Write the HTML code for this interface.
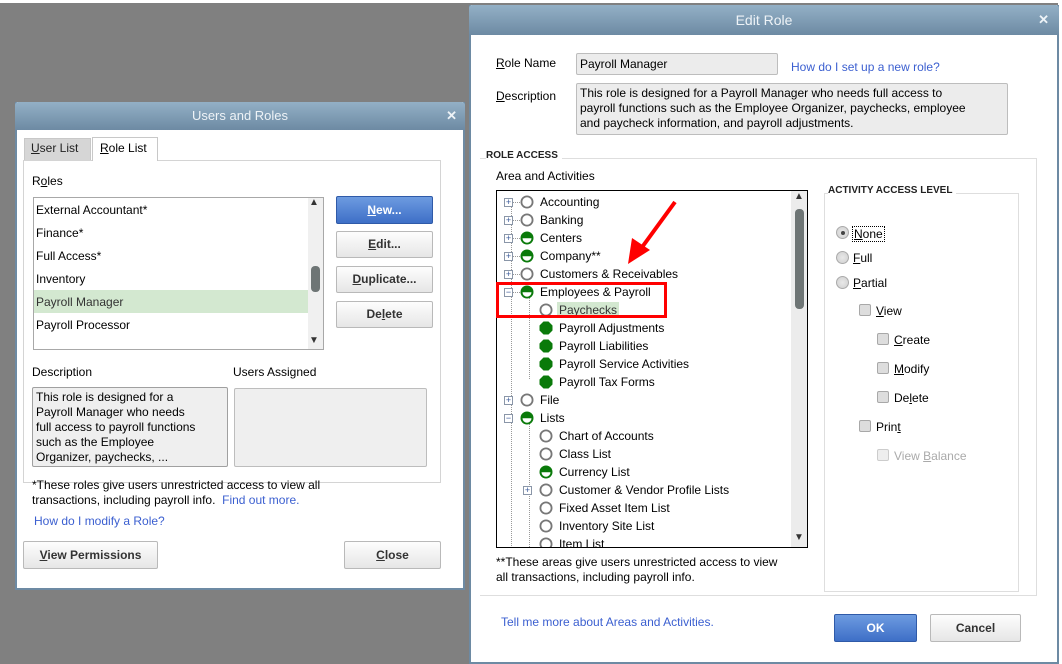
<!DOCTYPE html>
<html><head><meta charset="utf-8"><style>
*{margin:0;padding:0;box-sizing:border-box}
body{width:1062px;height:664px;overflow:hidden;background:#808080;font-family:"Liberation Sans",sans-serif;font-size:12px;color:#000;position:relative}
.a{position:absolute}
.title{background:linear-gradient(#93b0c6,#6d8aa3);color:#eef3f7;text-align:center;font-size:13px}
.btn{position:absolute;border:1px solid #b9b9b9;border-radius:2px;background:linear-gradient(#fdfdfd,#e6e6e6);text-align:center;font-weight:bold;color:#333;font-size:12px}
.blue{background:linear-gradient(#6d9be0,#3e6fc7);border-color:#2f5aa8;color:#fff}
.link{color:#3b5fd0}
.tx{position:absolute;white-space:nowrap}
.box{position:absolute;background:#efefef;border:1px solid #bdbdbd;border-radius:2px}
.ti{position:absolute;white-space:nowrap;height:18px;line-height:18px}
.ti svg{position:absolute;left:0;top:2px}
.ti span{position:absolute;left:20px}
.pl{position:absolute;width:9px;height:9px;border:1px solid #8a96a8;background:#fff;font-size:9px;line-height:7px;text-align:center;color:#3a5a9a}
.cb{position:absolute;width:12px;height:12px;border:1px solid #a8a8a8;background:#ddd;border-radius:2px}
.rb{position:absolute;width:13px;height:13px;border:1px solid #aaa;border-radius:50%;background:radial-gradient(#e8e8e8,#cfcfcf)}
u{text-decoration:underline}
</style></head><body>
<div class="a" style="left:0;top:0;width:1062px;height:3px;background:#fff"></div>
<div class="a" style="left:1058px;top:0;width:4px;height:664px;background:#fff"></div>

<!-- Users and Roles -->
<div class="a" style="left:15px;top:102px;width:450px;height:488px;background:#fff;border:2px solid #6d8aa3;border-top:none">
 <div class="title a" style="left:-2px;top:0;width:450px;height:28px;line-height:28px;border-radius:3px 3px 0 0">Users and Roles<span class="a" style="right:8px;top:0;font-weight:bold">✕</span></div>
</div>
<div class="a" style="left:24px;top:138px;width:67px;height:23px;background:#d6d6d6;border:1px solid #c8c8c8;border-bottom:none"></div>
<div class="tx" style="left:31px;top:141px;color:#222"><u>U</u>ser List</div>
<div class="a" style="left:92px;top:137px;width:66px;height:24px;background:#fff;border:1px solid #c8c8c8;border-bottom:none;z-index:2"></div>
<div class="tx" style="left:100px;top:141px;z-index:3"><u>R</u>ole List</div>
<div class="a" style="left:23px;top:160px;width:418px;height:323px;border:1px solid #d4d4d4"></div>
<div class="tx" style="left:32px;top:174px">R<u>o</u>les</div>
<div class="a" style="left:33px;top:197px;width:291px;height:153px;border:1px solid #a8a8a8;background:#fff"></div>
<div class="a" style="left:34px;top:290px;width:274px;height:23px;background:#d3e8d0"></div>
<div class="tx" style="left:36px;top:203px">External Accountant*</div>
<div class="tx" style="left:36px;top:226px">Finance*</div>
<div class="tx" style="left:36px;top:249px">Full Access*</div>
<div class="tx" style="left:36px;top:272px">Inventory</div>
<div class="tx" style="left:36px;top:295px;color:#333">Payroll Manager</div>
<div class="tx" style="left:36px;top:318px">Payroll Processor</div>
<div class="a" style="left:308px;top:198px;width:15px;height:151px;background:#f0f0f0"></div>
<div class="tx" style="left:309px;top:197px;font-size:10px;color:#333">▲</div>
<div class="tx" style="left:309px;top:335px;font-size:10px;color:#333">▼</div>
<div class="a" style="left:311px;top:266px;width:9px;height:26px;background:#6e7575;border-radius:4px"></div>
<div class="btn blue" style="left:336px;top:196px;width:97px;height:28px;line-height:26px"><u>N</u>ew...</div>
<div class="btn" style="left:336px;top:231px;width:97px;height:27px;line-height:25px"><u>E</u>dit...</div>
<div class="btn" style="left:336px;top:266px;width:97px;height:27px;line-height:25px"><u>D</u>uplicate...</div>
<div class="btn" style="left:336px;top:301px;width:97px;height:27px;line-height:25px">De<u>l</u>ete</div>
<div class="tx" style="left:32px;top:365px">Description</div>
<div class="tx" style="left:233px;top:365px">Users Assigned</div>
<div class="box" style="left:32px;top:387px;width:196px;height:80px;border-color:#a0a0a0"></div>
<div class="tx" style="left:36px;top:390px;line-height:15px">This role is designed for a<br>Payroll Manager who needs<br>full access to payroll functions<br>such as the Employee<br>Organizer, paychecks, ...</div>
<div class="box" style="left:234px;top:388px;width:193px;height:79px"></div>
<div class="tx" style="left:32px;top:478px;line-height:15px">*These roles give users unrestricted access to view all<br>transactions, including payroll info. <span class="link">&nbsp;Find out more.</span></div>
<div class="tx link" style="left:34px;top:514px">How do I modify a Role?</div>
<div class="btn" style="left:23px;top:541px;width:135px;height:28px;line-height:26px"><u>V</u>iew Permissions</div>
<div class="btn" style="left:344px;top:541px;width:97px;height:28px;line-height:26px"><u>C</u>lose</div>

<!-- Edit Role -->
<div class="a" style="left:469px;top:5px;width:590px;height:659px;background:#fff;border:2px solid #6d8aa3;border-top:none">
 <div class="title a" style="left:-2px;top:0;width:590px;height:30px;line-height:30px;border-radius:3px 3px 0 0;font-size:14px">Edit Role<span class="a" style="right:10px;top:0;font-weight:bold;font-size:13px">✕</span></div>
</div>
<div class="tx" style="left:496px;top:56px"><u>R</u>ole Name</div>
<div class="box" style="left:576px;top:53px;width:202px;height:22px;background:#ececec"></div>
<div class="tx" style="left:580px;top:57px">Payroll Manager</div>
<div class="tx link" style="left:791px;top:60px">How do I set up a new role?</div>
<div class="tx" style="left:496px;top:89px"><u>D</u>escription</div>
<div class="box" style="left:576px;top:83px;width:432px;height:52px;background:#ececec"></div>
<div class="tx" style="left:580px;top:86px;line-height:15px">This role is designed for a Payroll Manager who needs full access to<br>payroll functions such as the Employee Organizer, paychecks, employee<br>and paycheck information, and payroll adjustments.</div>

<div class="a" style="left:480px;top:158px;width:557px;height:438px;border:1px solid #dedede;border-left:none"></div>
<div class="tx" style="left:486px;top:150px;font-size:10px;font-weight:bold;background:#fff;padding-right:4px;color:#222">ROLE ACCESS</div>
<div class="tx" style="left:496px;top:169px">Area and Activities</div>

<div class="a" style="left:496px;top:190px;width:312px;height:358px;border:1px solid #000;background:#fff;overflow:hidden">
 <div class="a" style="left:294px;top:0;width:16px;height:356px;background:#ececec"></div>
 <div class="tx" style="left:297px;top:0;font-size:10px;color:#333">▲</div>
 <div class="tx" style="left:297px;top:341px;font-size:10px;color:#333">▼</div>
 <div class="a" style="left:298px;top:18px;width:9px;height:100px;background:#6e7575;border-radius:4px"></div>
 <div class="a" style="left:14px;top:14px;height:345px;border-left:1px dotted #999"></div>
 <div class="a" style="left:32px;top:106px;height:82px;border-left:1px dotted #999"></div>
 <div class="a" style="left:32px;top:232px;height:130px;border-left:1px dotted #999"></div>
</div>

<svg width="0" height="0" style="position:absolute">
<defs>
<g id="none"><circle cx="7" cy="7" r="5.6" fill="#fff" stroke="#777" stroke-width="1.8"/></g>
<g id="half"><circle cx="7" cy="7" r="6.5" fill="#0a7a0a"/><path d="M2.5 7.2 A4.5 4.5 0 0 0 11.5 7.2 Z" fill="#fff"/></g>
<g id="full"><polygon points="4.5,0.5 9.5,0.5 13.5,4.5 13.5,9.5 9.5,13.5 4.5,13.5 0.5,9.5 0.5,4.5" fill="#0a7a0a"/></g>
</defs></svg>

<div id="tree">
<!-- top level items at x 520 icon, text 540 -->
</div>
<div class="pl" style="left:504px;top:198px">+</div><div class="a" style="left:513px;top:202px;width:7px;border-top:1px dotted #999"></div>
<div class="ti" style="left:520px;top:193px"><svg width="14" height="14"><use href="#none"/></svg><span>Accounting</span></div>
<div class="pl" style="left:504px;top:216px">+</div><div class="a" style="left:513px;top:220px;width:7px;border-top:1px dotted #999"></div>
<div class="ti" style="left:520px;top:211px"><svg width="14" height="14"><use href="#none"/></svg><span>Banking</span></div>
<div class="pl" style="left:504px;top:234px">+</div><div class="a" style="left:513px;top:238px;width:7px;border-top:1px dotted #999"></div>
<div class="ti" style="left:520px;top:229px"><svg width="14" height="14"><use href="#half"/></svg><span>Centers</span></div>
<div class="pl" style="left:504px;top:252px">+</div><div class="a" style="left:513px;top:256px;width:7px;border-top:1px dotted #999"></div>
<div class="ti" style="left:520px;top:247px"><svg width="14" height="14"><use href="#half"/></svg><span>Company**</span></div>
<div class="pl" style="left:504px;top:270px">+</div><div class="a" style="left:513px;top:274px;width:7px;border-top:1px dotted #999"></div>
<div class="ti" style="left:520px;top:265px"><svg width="14" height="14"><use href="#none"/></svg><span>Customers &amp; Receivables</span></div>
<div class="pl" style="left:504px;top:288px">−</div><div class="a" style="left:513px;top:292px;width:7px;border-top:1px dotted #999"></div>
<div class="ti" style="left:520px;top:283px"><svg width="14" height="14"><use href="#half"/></svg><span>Employees &amp; Payroll</span></div>
<div class="a" style="left:557px;top:302px;width:62px;height:15px;background:#d3e8d0"></div>
<div class="ti" style="left:539px;top:301px"><svg width="14" height="14"><use href="#none"/></svg><span style="color:#333">Paychecks</span></div>
<div class="ti" style="left:539px;top:319px"><svg width="14" height="14"><use href="#full"/></svg><span>Payroll Adjustments</span></div>
<div class="ti" style="left:539px;top:337px"><svg width="14" height="14"><use href="#full"/></svg><span>Payroll Liabilities</span></div>
<div class="ti" style="left:539px;top:355px"><svg width="14" height="14"><use href="#full"/></svg><span>Payroll Service Activities</span></div>
<div class="ti" style="left:539px;top:373px"><svg width="14" height="14"><use href="#full"/></svg><span>Payroll Tax Forms</span></div>
<div class="pl" style="left:504px;top:396px">+</div>
<div class="ti" style="left:520px;top:391px"><svg width="14" height="14"><use href="#none"/></svg><span>File</span></div>
<div class="pl" style="left:504px;top:414px">−</div>
<div class="ti" style="left:520px;top:409px"><svg width="14" height="14"><use href="#half"/></svg><span>Lists</span></div>
<div class="ti" style="left:539px;top:427px"><svg width="14" height="14"><use href="#none"/></svg><span>Chart of Accounts</span></div>
<div class="ti" style="left:539px;top:445px"><svg width="14" height="14"><use href="#none"/></svg><span>Class List</span></div>
<div class="ti" style="left:539px;top:463px"><svg width="14" height="14"><use href="#half"/></svg><span>Currency List</span></div>
<div class="pl" style="left:523px;top:486px">+</div>
<div class="ti" style="left:539px;top:481px"><svg width="14" height="14"><use href="#none"/></svg><span>Customer &amp; Vendor Profile Lists</span></div>
<div class="ti" style="left:539px;top:499px"><svg width="14" height="14"><use href="#none"/></svg><span>Fixed Asset Item List</span></div>
<div class="ti" style="left:539px;top:517px"><svg width="14" height="14"><use href="#none"/></svg><span>Inventory Site List</span></div>
<div class="a" style="left:530px;top:535px;width:260px;height:12px;overflow:hidden"><div class="ti" style="left:9px;top:0"><svg width="14" height="14"><use href="#none"/></svg><span>Item List</span></div></div>

<!-- red highlight + arrow -->
<div class="a" style="left:496px;top:282px;width:171px;height:36px;border:3px solid #f00"></div>
<svg class="a" style="left:610px;top:198px" width="70" height="70"><line x1="65" y1="4" x2="30" y2="52" stroke="#f00" stroke-width="4"/><polygon points="18,66 22,40 40,52" fill="#f00"/></svg>

<div class="tx" style="left:496px;top:555px;line-height:15px">**These areas give users unrestricted access to view<br>all transactions, including payroll info.</div>

<!-- activity access -->
<div class="a" style="left:824px;top:193px;width:195px;height:399px;border:1px solid #dedede"></div>
<div class="tx" style="left:828px;top:185px;font-size:10px;font-weight:bold;background:#fff;padding-right:4px;color:#222">ACTIVITY ACCESS LEVEL</div>
<div class="rb" style="left:836px;top:226px"><div class="a" style="left:3.5px;top:3.5px;width:4px;height:4px;border-radius:50%;background:#444"></div></div>
<div class="tx" style="left:852px;top:226px;border:1px dotted #000;padding:0 1px"><u>N</u>one</div>
<div class="rb" style="left:836px;top:251px"></div><div class="tx" style="left:853px;top:251px"><u>F</u>ull</div>
<div class="rb" style="left:836px;top:276px"></div><div class="tx" style="left:853px;top:276px"><u>P</u>artial</div>
<div class="cb" style="left:859px;top:304px"></div><div class="tx" style="left:876px;top:304px"><u>V</u>iew</div>
<div class="cb" style="left:877px;top:333px"></div><div class="tx" style="left:894px;top:333px"><u>C</u>reate</div>
<div class="cb" style="left:877px;top:362px"></div><div class="tx" style="left:894px;top:362px"><u>M</u>odify</div>
<div class="cb" style="left:877px;top:391px"></div><div class="tx" style="left:894px;top:391px">De<u>l</u>ete</div>
<div class="cb" style="left:859px;top:420px"></div><div class="tx" style="left:876px;top:420px">Prin<u>t</u></div>
<div class="cb" style="left:877px;top:449px;background:#eee;border-color:#ccc"></div><div class="tx" style="left:894px;top:449px;color:#aaa">View <u>B</u>alance</div>

<div class="tx link" style="left:501px;top:615px">Tell me more about Areas and Activities.</div>
<div class="btn blue" style="left:834px;top:614px;width:83px;height:28px;line-height:26px">OK</div>
<div class="btn" style="left:930px;top:614px;width:91px;height:28px;line-height:26px">Cancel</div>
</body></html>
